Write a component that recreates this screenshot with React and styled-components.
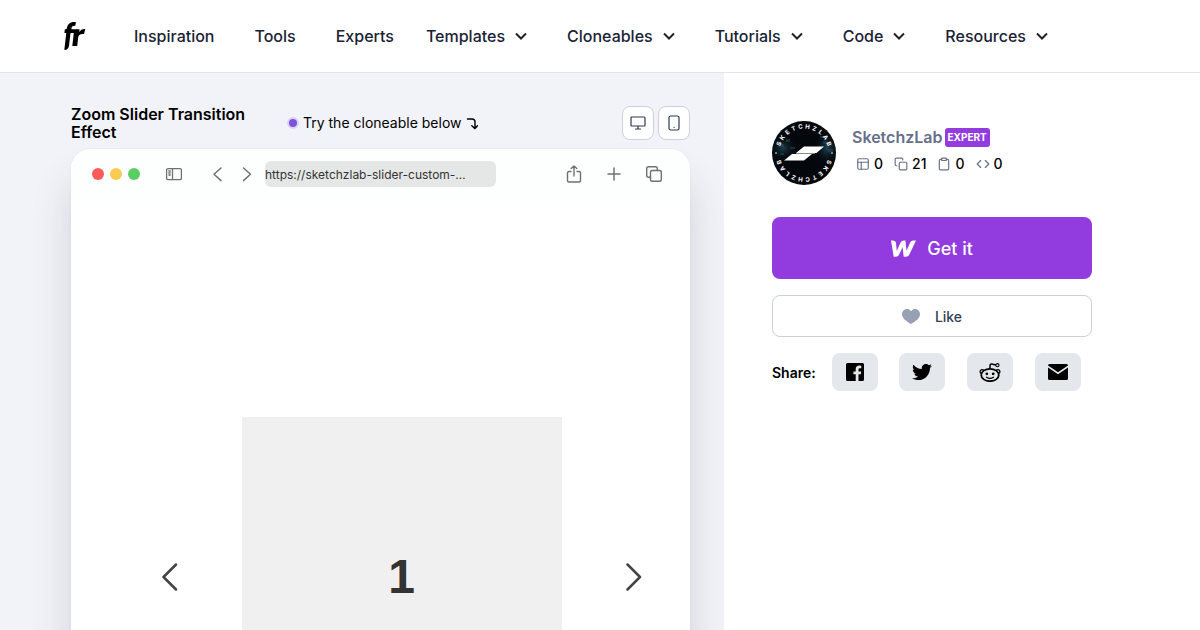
import React from "react";
import styled, { createGlobalStyle } from "styled-components";
import { FaTwitter } from "react-icons/fa";
import { FiLayout, FiCopy, FiClipboard, FiCode } from "react-icons/fi";

const GlobalStyle = createGlobalStyle`
  *, *::before, *::after { box-sizing: border-box; }
  body { margin: 0; background: #fff; color: #000; font-family: Inter, "Liberation Sans", sans-serif; }
  button, input { font-family: inherit; }
  svg { display: block; flex: none; }
`;

const Page = styled.div`
  display: flex;
  flex-direction: column;
  height: 100vh;
  overflow: hidden;
`;

const Header = styled.header`
  display: flex;
  align-items: center;
  flex: none;
  height: 73px;
  padding: 0 64px;
  border-bottom: 1px solid #e2e4e9;
`;

const Logo = styled.a`
  width: 70px;
`;

const Nav = styled.nav`
  display: flex;
  align-items: center;
  gap: 32px;
`;

const NavGroup = styled.div`
  display: flex;
  gap: 40px;
`;

const NavLink = styled.a`
  color: #1a2234;
  font-size: 16px;
  font-weight: 500;
  line-height: 24px;
  text-decoration: none;
`;

const NavMenu = styled.button`
  display: flex;
  align-items: center;
  gap: 10px;
  padding: 0;
  border: 0;
  background: none;
  color: #1a2234;
  font-size: 16px;
  font-weight: 500;
  line-height: 24px;
`;

const Main = styled.main`
  display: grid;
  grid-template-columns: minmax(0, 1fr) 476px;
  flex: 1;
  min-height: 0;
`;

const Preview = styled.section`
  display: flex;
  flex-direction: column;
  gap: 8px;
  padding: 32px 34px 0 71px;
  background: #f2f3f8;
  overflow: hidden;
`;

const PreviewHead = styled.div`
  display: flex;
  align-items: center;
  flex: none;
`;

const Title = styled.h1`
  width: 216px;
  margin: 0;
  padding-right: 24px;
  font-size: 16px;
  font-weight: 600;
  line-height: 18px;
`;

const Hint = styled.p`
  display: flex;
  align-items: center;
  flex: 1;
  gap: 4px;
  margin: 0;
  font-size: 14px;
  line-height: 20px;
`;

const Pulse = styled.span`
  width: 12px;
  height: 12px;
  border: 2px solid #dcd4f3;
  border-radius: 50%;
  background: #7d53dc;
`;

const DeviceList = styled.div`
  display: flex;
  gap: 4px;
`;

const DeviceButton = styled.button`
  display: grid;
  place-items: center;
  width: 32px;
  height: 34px;
  padding: 0;
  border: 1px solid #cbd2df;
  border-radius: 8px;
  background: #fff;
  color: #2b3a55;
`;

const Browser = styled.div`
  flex: none;
  border-radius: 20px;
  background: #fff;
  box-shadow: 0 0 2px rgba(40, 50, 70, 0.08), 0 32px 40px rgba(40, 50, 70, 0.16);
  overflow: hidden;
`;

const Toolbar = styled.div`
  display: flex;
  align-items: center;
  height: 50px;
  padding: 0 28px 0 21px;
  background: #fdfefe;
  color: #707070;
`;

const Lights = styled.div`
  display: flex;
  gap: 6px;
  margin-right: 26px;
`;

const Light = styled.span`
  width: 12px;
  height: 12px;
  border-radius: 50%;
  background: ${(p) => p.$color};
`;

const History = styled.div`
  display: flex;
  gap: 14px;
  margin: 0 10px 0 27px;
`;

const Address = styled.input`
  width: 231px;
  height: 26px;
  margin-right: auto;
  padding: 0;
  border: 0;
  border-radius: 6px;
  background: #e5e7e7;
  color: #333;
  font-size: 12px;
`;

const Actions = styled.div`
  display: flex;
  gap: 24px;
`;

const ToolButton = styled.button`
  display: grid;
  place-items: center;
  width: 16px;
  height: 20px;
  padding: 0;
  border: 0;
  background: none;
  color: inherit;
`;

const Stage = styled.div`
  display: flex;
  align-items: center;
  justify-content: center;
  gap: 64px;
  height: 756px;
  padding-left: 42px;
`;

const ArrowButton = styled.button`
  padding: 0;
  border: 0;
  background: none;
  color: #444;
`;

const Slide = styled.div`
  display: grid;
  place-items: center;
  width: 320px;
  height: 320px;
  background: #f0f0f0;
  color: #333;
  font: bold 48px/56px "Liberation Sans", Arial, sans-serif;
`;

const Sidebar = styled.aside`
  padding: 48px;
`;

const SideInner = styled.div`
  display: flex;
  flex-direction: column;
  gap: 16px;
  max-width: 320px;
`;

const Author = styled.div`
  display: flex;
  gap: 16px;
  margin-bottom: 16px;
`;

const NameRow = styled.div`
  display: flex;
  align-items: center;
  gap: 2px;
  padding-top: 4px;
`;

const AuthorName = styled.a`
  color: #667089;
  font-size: 16px;
  font-weight: 600;
  line-height: 24px;
  text-decoration: none;
`;

const Badge = styled.span`
  padding: 0 3px;
  border-radius: 3px;
  background: #923bdf;
  color: #fff;
  font-size: 10px;
  font-weight: 700;
  line-height: 19px;
`;

const Stats = styled.ul`
  display: flex;
  gap: 11px;
  margin: 5px 0 0;
  padding: 0 0 0 4px;
  list-style: none;
`;

const Stat = styled.li`
  display: flex;
  align-items: center;
  gap: 4px;
  font-size: 14px;
  font-weight: 500;
  line-height: 20px;

  svg { color: #667089; }
`;

const GetButton = styled.button`
  display: flex;
  align-items: center;
  justify-content: center;
  gap: 11px;
  height: 62px;
  border: 0;
  border-radius: 8px;
  background: #923bdf;
  color: #fff;
  font-size: 18px;
  font-weight: 500;
`;

const LikeButton = styled.button`
  display: flex;
  align-items: center;
  justify-content: center;
  gap: 15px;
  height: 42px;
  border: 1px solid #cbd0de;
  border-radius: 8px;
  background: #fff;
  color: #344057;
  font-size: 14px;
  font-weight: 500;
`;

const Share = styled.div`
  display: flex;
  align-items: center;
  gap: 16px;
  font-size: 14px;
  font-weight: 600;
`;

const ShareList = styled.div`
  display: flex;
  flex: 1;
  justify-content: space-between;
  margin-right: 11px;
`;

const ShareLink = styled.a`
  display: grid;
  place-items: center;
  width: 46px;
  height: 38px;
  border-radius: 8px;
  background: #e4e7ec;
  color: #000;
`;

const Stroke = ({ w, h, sw = 1.5, children }) => (
  <svg width={w} height={h} viewBox={`0 0 ${w} ${h}`} fill="none" stroke="currentColor" strokeWidth={sw} strokeLinecap="round" strokeLinejoin="round" aria-hidden="true">
    {children}
  </svg>
);

const LogoMark = () => (
  <svg width="22" height="28" viewBox="0 0 22 28" aria-hidden="true">
    <path d="M12 0.200C6.500-.6 3.400 1.800 2.800 6.700L.8 7.600.4 11h1.900L.3 28C3.200 28 4.600 26.600 5 23.600L6.500 11h3.300L8.300 24h4.900l1-8.500c.3-2.400 1.700-3.700 4.600-3.600h1.200L21.300 7c-2.700-.3-4.600.8-6 3l.2-2.800H7.300c.2-2.500 1.400-3.600 3.900-3.300z" />
  </svg>
);

const ringLetters = [..."SKETCHZLAB"];

const Avatar = () => (
  <svg width="64" height="64" viewBox="0 0 64 64" role="img" aria-label="SketchzLab">
    <defs>
      <radialGradient id="glow">
        <stop offset="0" stopColor="#28536a" />
        <stop offset="1" stopColor="#04080c" stopOpacity="0" />
      </radialGradient>
      <clipPath id="disc"><circle cx="32" cy="32" r="32" /></clipPath>
    </defs>
    <g clipPath="url(#disc)">
      <rect width="64" height="64" fill="#04080c" />
      <ellipse cx="11" cy="27" rx="15" ry="14" fill="url(#glow)" opacity=".7" />
      <ellipse cx="55" cy="27" rx="14" ry="17" fill="url(#glow)" opacity=".8" />
      <path d="M6 23h6v3H6zM14 18h4v3h-4zM8 32h4v2H8zM51 20h5v3h-5zM56 28h5v3h-5zM48 15h4v2h-4zM18 26h5v2h-5z" fill="#245064" opacity=".5" />
    </g>
    <path d="M24 32 32 25.500h20L44.500 32zM12 39.500 20 33h20l-8 6.500z" fill="#fff" />
    <path d="M24 32.500h19" stroke="#888" />
    <g fill="#fff" fontFamily="Inter, sans-serif" fontSize="6" fontWeight="700" textAnchor="middle">
      {[0, 180].map((turn) =>
        ringLetters.map((c, i) => (
          <text key={`${turn}-${i}`} x="32" y="7.500" transform={`rotate(${turn + (i - 4.5) * 15.5} 32 32)`}>{c}</text>
        ))
      )}
    </g>
    <circle cx="4" cy="32" r=".8" fill="#fff" />
    <circle cx="60" cy="32" r=".8" fill="#fff" />
  </svg>
);

const links = ["Inspiration", "Tools", "Experts"];
const menus = ["Templates", "Cloneables", "Tutorials", "Code", "Resources"];
const stats = [
  [FiLayout, "0", "Layouts"],
  [FiCopy, "21", "Cloneables"],
  [FiClipboard, "0", "Clipboards"],
  [FiCode, "0", "Snippets"],
];

export default function App() {
  return (
    <Page>
      <GlobalStyle />
      <Header>
        <Logo href="#" aria-label="Home"><LogoMark /></Logo>
        <Nav>
          <NavGroup>
            {links.map((t) => <NavLink href="#" key={t}>{t}</NavLink>)}
          </NavGroup>
          <NavGroup>
            {menus.map((t) => (
              <NavMenu key={t}>
                {t}
                <svg width="12" height="8" viewBox="0 0 12 8" fill="none" stroke="#222" strokeWidth="2" aria-hidden="true"><path d="m1 1.500 5 5 5-5" /></svg>
              </NavMenu>
            ))}
          </NavGroup>
        </Nav>
      </Header>
      <Main>
        <Preview>
          <PreviewHead>
            <Title>Zoom Slider Transition Effect</Title>
            <Hint>
              <Pulse />
              Try the cloneable below
              <Stroke w={12} h={14} sw={1.4}><path d="M1.500 3h4.500q3 0 3 3v6M5.800 9.800 9 12.600l2.400-2.800" /></Stroke>
            </Hint>
            <DeviceList>
              <DeviceButton aria-label="Desktop">
                <Stroke w={16} h={16} sw={1.2}><path d="M2 2h12q1 0 1 1v7q0 1-1 1H2q-1 0-1-1V3q0-1 1-1zM8 11v3M5.500 14h5" /></Stroke>
              </DeviceButton>
              <DeviceButton aria-label="Tablet">
                <Stroke w={16} h={16} sw={1.2}><rect x="3" y="1" width="10" height="14" rx="1.500" /><path d="M8 12.300h.1" /></Stroke>
              </DeviceButton>
            </DeviceList>
          </PreviewHead>
          <Browser>
            <Toolbar>
              <Lights>
                <Light $color="#fc5b57" />
                <Light $color="#f9cb50" />
                <Light $color="#5ccd63" />
              </Lights>
              <ToolButton aria-label="Sidebar">
                <Stroke w={16} h={16} sw={1.3}><rect x=".6" y="2.600" width="14.800" height="11" rx="1.500" /><path d="M6.500 2.600v11M2.800 5h1.500M2.800 7h1.500M2.800 9h1.500" /></Stroke>
              </ToolButton>
              <History>
                <ToolButton aria-label="Back"><Stroke w={16} h={16}><path d="M12 2 5 8.300l7 6.300" /></Stroke></ToolButton>
                <ToolButton aria-label="Forward"><Stroke w={16} h={16}><path d="m4.500 2 7 6.300-7 6.300" /></Stroke></ToolButton>
              </History>
              <Address aria-label="Address" readOnly value="https://sketchzlab-slider-custom-…" />
              <Actions>
                <ToolButton aria-label="Share"><Stroke w={16} h={18} sw={1.4}><path d="M5 6.500H3q-1.500 0-1.500 1.500v7.500Q1.500 17 3 17h10q1.500 0 1.500-1.500V8q0-1.500-1.500-1.500h-2M8 11V1M5.200 3.600 8 1l2.800 2.600" /></Stroke></ToolButton>
                <ToolButton aria-label="New tab"><Stroke w={16} h={16}><path d="M8 2v12M2 8h12" /></Stroke></ToolButton>
                <ToolButton aria-label="Tabs"><Stroke w={16} h={16} sw={1.4}><rect x="4.500" y="4.500" width="10.800" height="10.800" rx="1.800" /><path d="M4.500 11.300H2.500Q.7 11.300.7 9.500v-7Q.7.700 2.500.700h7q1.800 0 1.800 1.800v2" /></Stroke></ToolButton>
              </Actions>
            </Toolbar>
            <Stage>
              <ArrowButton aria-label="Previous slide"><Stroke w={16} h={28} sw={2.500}><path d="M14 1.500 1.500 14 14 26.500" /></Stroke></ArrowButton>
              <Slide>1</Slide>
              <ArrowButton aria-label="Next slide"><Stroke w={16} h={28} sw={2.500}><path d="M1.500 1.500 14 14 1.500 26.500" /></Stroke></ArrowButton>
            </Stage>
          </Browser>
        </Preview>
        <Sidebar>
          <SideInner>
            <Author>
              <Avatar />
              <div>
                <NameRow>
                  <AuthorName href="#">SketchzLab</AuthorName>
                  <Badge>EXPERT</Badge>
                </NameRow>
                <Stats>
                  {stats.map(([Icon, n, label]) => (
                    <Stat key={label} aria-label={label}><Icon size={14} strokeWidth={2} />{n}</Stat>
                  ))}
                </Stats>
              </div>
            </Author>
            <GetButton>
              <svg width="25" height="17" viewBox="0 0 25 17" fill="#fff" aria-hidden="true">
                <path d="M0 .5h1.800c2 0 3 1 3.200 2.800l.8 7.700 3.300-7.500C10 1.500 11.200.5 12.700.5h1.700l1.200 10.300 3.200-7.600C19.600 1.400 20.700.5 22.200.5H25l-6.500 13.800c-.8 1.700-2 2.500-3.600 2.500h-2.200l-1.100-9.500-3.300 7c-.8 1.700-1.800 2.500-3.400 2.500H2.700z" />
              </svg>
              Get it
            </GetButton>
            <LikeButton>
              <svg width="18" height="15" viewBox="0 0 18 15" fill="#98a1b3" aria-hidden="true">
                <path d="M9 2.200C7.500.2 5.600-.2 3.700.3 1.400.9-.2 3 0 5.600c.3 4 4.300 6.800 9 9.400 4.700-2.600 8.700-5.400 9-9.400.2-2.600-1.400-4.700-3.700-5.300-1.900-.5-3.800-.1-5.300 1.900z" />
              </svg>
              Like
            </LikeButton>
            <Share>
              Share:
              <ShareList>
                <ShareLink href="#" aria-label="Facebook">
                  <svg width="18" height="18" viewBox="0 0 18 18" aria-hidden="true">
                    <path d="M1.500 0h15Q18 0 18 1.500v15q0 1.500-1.500 1.500h-4v-6.800h2.300l.4-2.800h-2.700V6.600c0-.9.4-1.400 1.400-1.400h1.400V2.800c-.5-.1-1.200-.2-2-.2-2.200 0-3.600 1.300-3.600 3.700v2.100H7.400v2.800h2.300V18H1.500Q0 18 0 16.500v-15Q0 0 1.500 0z" />
                  </svg>
                </ShareLink>
                <ShareLink href="#" aria-label="Twitter"><FaTwitter size={20} /></ShareLink>
                <ShareLink href="#" aria-label="Reddit">
                  <svg width="22" height="19" viewBox="0 0 22 19" fill="none" stroke="currentColor" aria-hidden="true">
                    <ellipse cx="11" cy="12" rx="8.800" ry="6.200" strokeWidth="1.800" />
                    <path d="M11 5.500V2.700Q11 1 12.500 1.100l4.500.9" strokeWidth="1.500" />
                    <circle cx="18.400" cy="2.200" r="1.600" strokeWidth="1.100" />
                    <path d="M2.200 10.500A2.100 2.100 0 1 1 4.800 7.300M19.800 10.500A2.100 2.100 0 1 0 17.200 7.300" strokeWidth="1.300" />
                    <path d="M7.500 14.200q3.500 2.300 7 0" strokeWidth="1.200" strokeLinecap="round" />
                    <circle cx="7.800" cy="10.800" r="1.400" fill="currentColor" stroke="none" />
                    <circle cx="14.200" cy="10.800" r="1.400" fill="currentColor" stroke="none" />
                  </svg>
                </ShareLink>
                <ShareLink href="#" aria-label="Email">
                  <svg width="20" height="16" viewBox="0 0 20 16" aria-hidden="true">
                    <path d="M1.500 0h17q1.500 0 1.500 1.500L10 8.200 0 1.500Q0 0 1.500 0zM0 3.500l10 6.700 10-6.700v11q0 1.500-1.500 1.500h-17Q0 16 0 14.500z" />
                  </svg>
                </ShareLink>
              </ShareList>
            </Share>
          </SideInner>
        </Sidebar>
      </Main>
    </Page>
  );
}
